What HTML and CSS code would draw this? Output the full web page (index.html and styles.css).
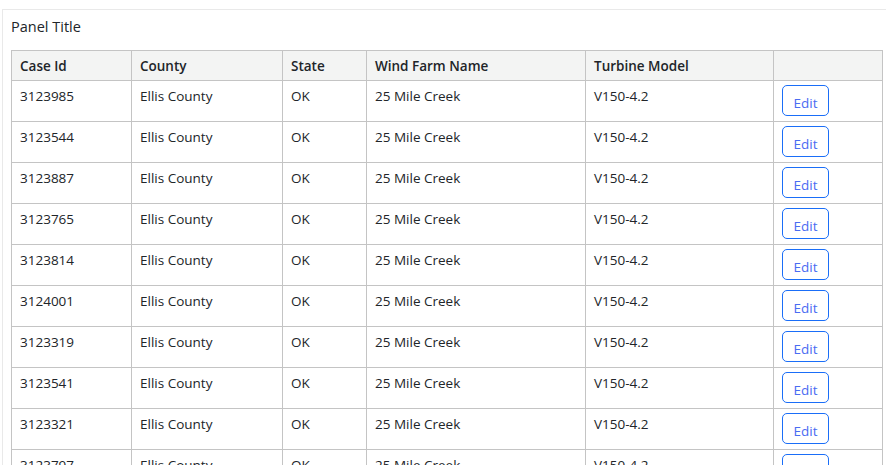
FILE: index.html
```html
<!DOCTYPE html>
<html>
<head>
<meta charset="utf-8">
<link rel="stylesheet" href="styles.css">
</head>
<body>
<div class="panel">
  <div class="panel-title">Panel Title</div>
  <table class="grid">
    <colgroup>
      <col class="c-id"><col class="c-county"><col class="c-state"><col class="c-farm"><col class="c-model"><col class="c-act">
    </colgroup>
    <thead>
      <tr><th>Case Id</th><th>County</th><th>State</th><th>Wind Farm Name</th><th>Turbine Model</th><th></th></tr>
    </thead>
    <tbody>
      <tr><td>3123985</td><td>Ellis County</td><td>OK</td><td>25 Mile Creek</td><td>V150-4.2</td><td><button class="btn">Edit</button></td></tr>
      <tr><td>3123544</td><td>Ellis County</td><td>OK</td><td>25 Mile Creek</td><td>V150-4.2</td><td><button class="btn">Edit</button></td></tr>
      <tr><td>3123887</td><td>Ellis County</td><td>OK</td><td>25 Mile Creek</td><td>V150-4.2</td><td><button class="btn">Edit</button></td></tr>
      <tr><td>3123765</td><td>Ellis County</td><td>OK</td><td>25 Mile Creek</td><td>V150-4.2</td><td><button class="btn">Edit</button></td></tr>
      <tr><td>3123814</td><td>Ellis County</td><td>OK</td><td>25 Mile Creek</td><td>V150-4.2</td><td><button class="btn">Edit</button></td></tr>
      <tr><td>3124001</td><td>Ellis County</td><td>OK</td><td>25 Mile Creek</td><td>V150-4.2</td><td><button class="btn">Edit</button></td></tr>
      <tr><td>3123319</td><td>Ellis County</td><td>OK</td><td>25 Mile Creek</td><td>V150-4.2</td><td><button class="btn">Edit</button></td></tr>
      <tr><td>3123541</td><td>Ellis County</td><td>OK</td><td>25 Mile Creek</td><td>V150-4.2</td><td><button class="btn">Edit</button></td></tr>
      <tr><td>3123321</td><td>Ellis County</td><td>OK</td><td>25 Mile Creek</td><td>V150-4.2</td><td><button class="btn">Edit</button></td></tr>
      <tr><td>3123797</td><td>Ellis County</td><td>OK</td><td>25 Mile Creek</td><td>V150-4.2</td><td><button class="btn">Edit</button></td></tr>
    </tbody>
  </table>
</div>
</body>
</html>
```
FILE: styles.css
```css
html, body {
  margin: 0;
  padding: 0;
  background: #fff;
  overflow: hidden;
  height: 465px;
}
body {
  font-family: "Open Sans", "Noto Sans", sans-serif;
  font-size: 13.5px;
  color: #212529;
}
.panel {
  margin: 9px 0 0 2px;
  width: 888px;
  border: 1px solid #e9e9e9;
  padding: 7px 8px 8px;
  box-sizing: border-box;
}
.panel-title {
  font-size: 14.5px;
  line-height: 20px;
  height: 20px;
  margin-bottom: 13px;
  color: #212529;
}
.grid {
  border-collapse: collapse;
  table-layout: fixed;
  width: 871px;
}
.c-id { width: 120px; }
.c-county { width: 151px; }
.c-state { width: 84px; }
.c-farm { width: 219px; }
.c-model { width: 188px; }
.c-act { width: 109px; }
.grid th, .grid td {
  border: 1px solid #c4c4c4;
  padding: 5px 8px 5px;
  line-height: 20px;
  text-align: left;
  vertical-align: top;
  white-space: nowrap;
  overflow: hidden;
}
.grid th {
  background: #f3f4f3;
  font-weight: 600;
  padding: 5px 8px 4px;
}
.btn {
  display: block;
  width: 47px;
  height: 31px;
  margin: -1px 0 0;
  padding: 4px 0 0;
  border: 1px solid #1a6ef8;
  border-radius: 5px;
  background: #fff;
  color: #4a6cf2;
  font-family: inherit;
  font-size: 13.5px;
  line-height: 20px;
  text-align: center;
  box-sizing: border-box;
}
```
